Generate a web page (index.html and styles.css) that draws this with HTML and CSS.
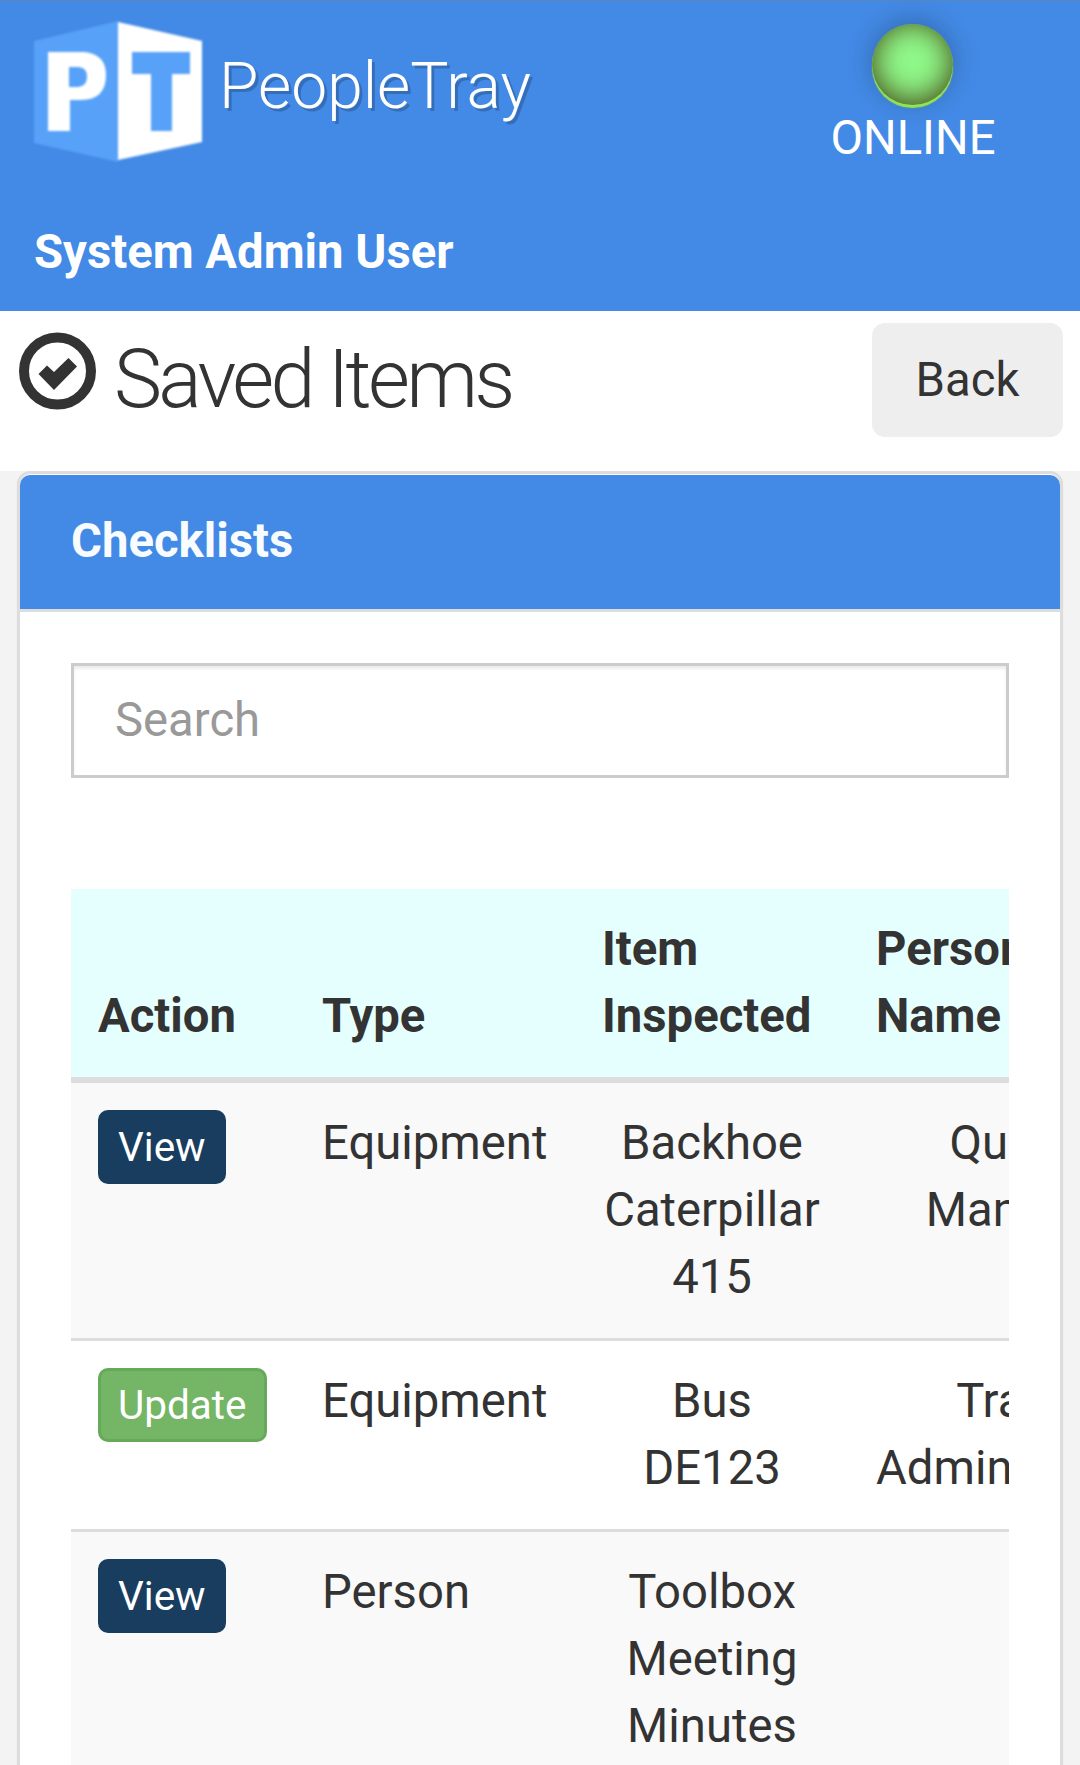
FILE: index.html
```html
<!DOCTYPE html>
<html lang="en">
<head>
<meta charset="utf-8">
<title>PeopleTray - Saved Items</title>
<link rel="stylesheet" href="styles.css">
</head>
<body>
<header class="topbar">
  <div class="topbar-row">
    <div class="brand">
      <svg class="logo" viewBox="0 0 169 141" aria-hidden="true">
        <path fill="#57a1f8" d="M0 20 84 0V141L0 122Z"/>
        <path fill="#fff" d="M84 1 168 20V121L84 139Z"/>
        <path fill="#fff" fill-rule="evenodd" d="M14 31H50Q72 33 72 54Q72 79 47 79H36V110H14ZM35 46V66H44Q53 65 53 56Q53 46 44 46Z"/>
        <path fill="#57a1f8" d="M98 31H156V53H138V110H117V53H98Z"/>
      </svg>
      <span class="brand-name">PeopleTray</span>
    </div>
    <div class="status">
      <span class="led"></span>
      <span class="status-text">ONLINE</span>
    </div>
  </div>
  <div class="user">System Admin User</div>
</header>
<section class="titlebar">
  <svg class="title-icon" viewBox="0 0 78 78" aria-hidden="true">
    <circle cx="39.5" cy="39" r="33.5" fill="none" stroke="#333" stroke-width="10"/>
    <path fill="#333" d="M20.500 42 29 33.500 36 40 50.500 26 59 34.500 36 58Z"/>
  </svg>
  <h1 class="title">Saved Items</h1>
  <button class="back" type="button">Back</button>
</section>
<main class="panel">
  <h2 class="panel-heading">Checklists</h2>
  <div class="panel-body">
    <input class="search" type="text" placeholder="Search">
    <div class="table-wrap">
      <table class="items">
        <colgroup><col class="c-action"><col class="c-type"><col class="c-item"><col class="c-person"></colgroup>
        <thead>
          <tr><th>Action</th><th>Type</th><th>Item<br>Inspected</th><th>Person<br>Name</th></tr>
        </thead>
        <tbody>
          <tr><td><a class="btn view">View</a></td><td>Equipment</td><td class="mid">Backhoe<br>Caterpillar<br>415</td><td class="mid">Quarry<br>Manager</td></tr>
          <tr><td><a class="btn update">Update</a></td><td>Equipment</td><td class="mid">Bus<br>DE123</td><td class="mid">Travis<br>Administrator</td></tr>
          <tr><td><a class="btn view">View</a></td><td>Person</td><td class="mid">Toolbox<br>Meeting<br>Minutes</td><td></td></tr>
        </tbody>
      </table>
    </div>
  </div>
</main>
</body>
</html>
```
FILE: styles.css
```css
* { box-sizing: border-box; }
html { height: 1765px; overflow: hidden; }
body {
  margin: 0;
  height: 1765px;
  overflow: hidden;
  display: flex;
  flex-direction: column;
  background: #f3f3f3;
  color: #333;
  font: 47.25px/67px Roboto, "Liberation Sans", sans-serif;
}
.topbar {
  flex: none;
  height: 311px;
  padding: 20px 84.5px 0 34px;
  border-top: 1px solid #5a86bd;
  background: #438ae6;
  color: #fff;
}
.topbar-row { display: flex; justify-content: space-between; height: 198px; }
.brand { display: flex; align-items: flex-start; }
.logo { width: 169px; height: 141px; filter: blur(.8px); }
.brand-name {
  margin: 18px 0 0 16px;
  font-size: 64.1px;
  line-height: 96px;
  font-weight: 300;
  text-shadow: 3px 3px 0 rgba(0, 0, 0, .2);
}
.status { display: flex; flex-direction: column; align-items: center; padding-top: 3px; }
.led {
  width: 81px;
  height: 81px;
  border-radius: 50%;
  background: #90f98a;
  box-shadow: #93e64d 0 3px 1px, rgba(0, 0, 0, .2) 0 -3px 24px 3px, inset #441 0 -3px 30px;
}
.user { font-weight: 700; line-height: 67px; }
.titlebar {
  flex: none;
  height: 160px;
  display: flex;
  align-items: flex-start;
  padding: 12px 17px 0 18px;
  background: #fff;
}
.title-icon { width: 78px; height: 78px; margin-top: 9px; }
.title {
  margin: 12px auto 0 18px;
  font-size: 81px;
  line-height: 90px;
  font-weight: 300;
  letter-spacing: -3.7px;
}
.back {
  width: 191px;
  height: 114px;
  padding: 0;
  border: 0;
  border-radius: 13px;
  background: #eee;
  color: #333;
  font: inherit;
}
.panel {
  flex: 1;
  margin: 0 17px;
  padding-top: 1px;
  border: 3px solid #ddd;
  border-bottom: 0;
  border-radius: 13px 13px 0 0;
  background: #fff;
  box-shadow: 0 3px 3px rgba(0, 0, 0, .05);
}
.panel-heading {
  height: 137px;
  margin: 0;
  padding: 33px 51px 0;
  border-bottom: 3px solid #ddd;
  border-radius: 10px 10px 0 0;
  background: #438ae6;
  color: #f8fcff;
  font-size: 47.25px;
  line-height: 67px;
}
.panel-body { padding: 51px 51px 0; }
.search {
  display: block;
  width: 100%;
  height: 115px;
  padding: 0 41px 2px;
  border: 3px solid #ccc;
  border-radius: 0;
  background: #fff;
  font: inherit;
  box-shadow: inset 0 3px 3px rgba(0, 0, 0, .075);
}
.search::placeholder { color: #999; opacity: 1; }
.table-wrap { margin-top: 111px; overflow: hidden; }
.items { width: 1118px; table-layout: fixed; border-spacing: 0; }
.c-action { width: 224px; }
.c-type { width: 280px; }
.c-item { width: 274px; }
.c-person { width: 340px; }
.items th, .items td { padding: 27px; vertical-align: top; text-align: left; white-space: nowrap; }
.items th { background: #e5ffff; border-bottom: 6px solid #ddd; vertical-align: bottom; }
.items td { border-top: 3px solid #ddd; }
.items tbody tr:first-child td { border-top: 0; }
.items tbody tr:nth-child(odd) { background: #f9f9f9; }
.items td.mid { text-align: center; }
.btn {
  display: block;
  width: max-content;
  height: 74px;
  padding: 0 17px;
  border: 3px solid;
  border-radius: 10px;
  color: #fff;
  font-size: 40.5px;
  line-height: 68px;
}
.view { background: #183d5f; border-color: #183d5f; }
.update { background: #74b566; border-color: #67a95a; }
```
